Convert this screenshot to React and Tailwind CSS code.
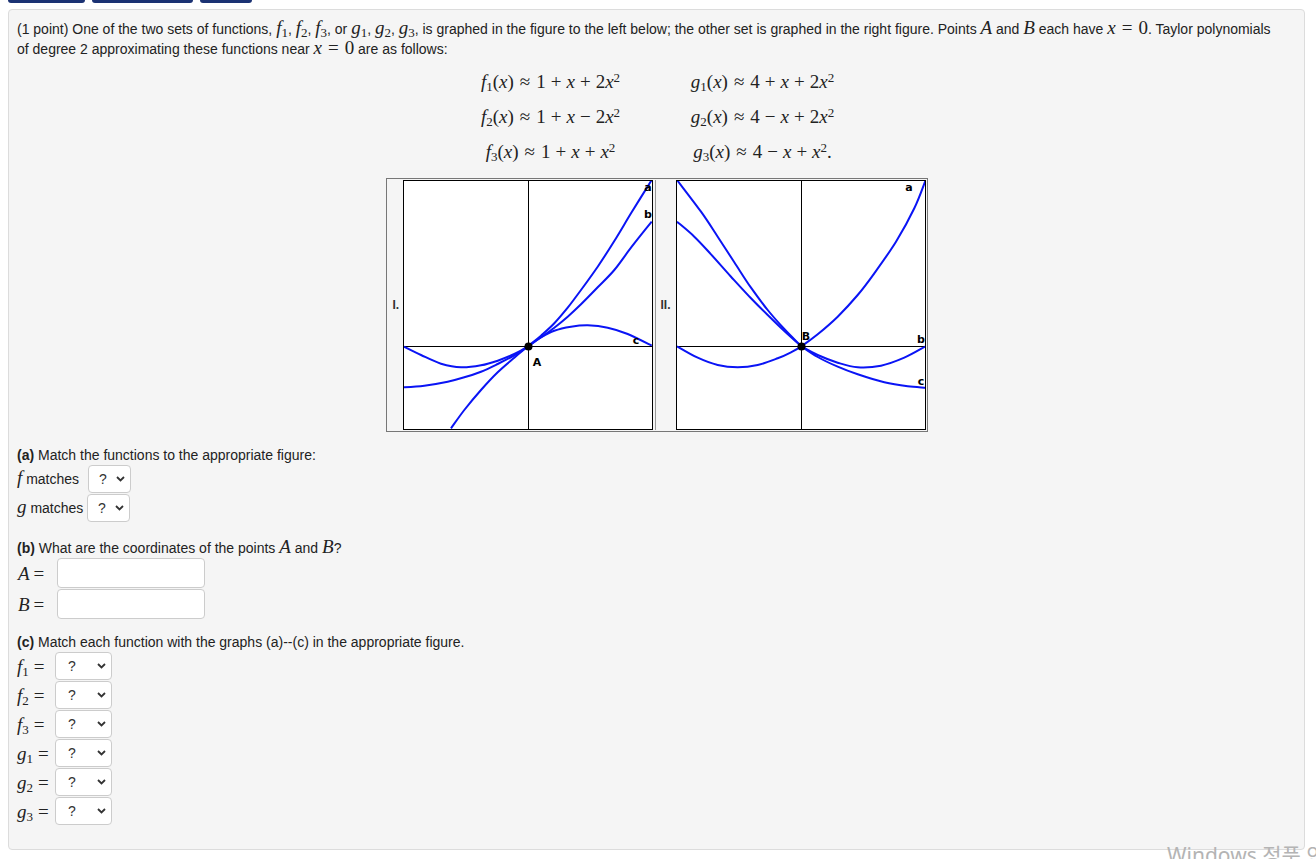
import React from "react";

const serif = "font-['Liberation_Serif',serif]";
const im = `${serif} text-[19px] leading-[14px]`;

function smooth(pts) {
  let d = `M${pts[0][0].toFixed(1)},${pts[0][1].toFixed(1)}`;
  for (let i = 0; i < pts.length - 1; i++) {
    const p0 = pts[i - 1] || pts[i];
    const p1 = pts[i];
    const p2 = pts[i + 1];
    const p3 = pts[i + 2] || p2;
    const c1 = [p1[0] + (p2[0] - p0[0]) / 6, p1[1] + (p2[1] - p0[1]) / 6];
    const c2 = [p2[0] - (p3[0] - p1[0]) / 6, p2[1] - (p3[1] - p1[1]) / 6];
    d += ` C${c1[0].toFixed(1)},${c1[1].toFixed(1)} ${c2[0].toFixed(1)},${c2[1].toFixed(1)} ${p2[0].toFixed(1)},${p2[1].toFixed(1)}`;
  }
  return d;
}

// traced from the figure, in 3x crop coords
const leftCurves = [
  [[210,760],[250,705],[300,645],[350,592],[400,548],[441,514],[480,482],[520,445],[560,398],[600,345],[650,275],[700,198],[750,115],[812,15]],
  [[67,637],[130,632],[200,620],[250,607],[300,590],[350,567],[400,541],[441,514],[480,487],[520,458],[560,425],[600,388],[650,337],[700,285],[750,218],[812,140]],
  [[67,514],[120,540],[180,566],[240,577],[300,571],[350,557],[400,537],[441,514],[480,487],[520,467],[570,455],[620,451],[680,458],[740,477],[812,512]],
].map((c) => c.map(([x, y]) => [x / 3 - 22, y / 3 - 5]));

const rightCurves = [
  [[78,514],[140,548],[200,570],[260,577],[320,570],[380,550],[420,532],[451,514],[500,478],[560,425],[620,360],[670,295],[735,200],[790,100],[824,15]],
  [[451,514],[400,462],[350,405],[300,338],[250,262],[200,185],[150,110],[78,15]],
  [[451,514],[400,468],[350,420],[300,370],[240,305],[180,238],[130,185],[78,140]],
  [[451,514],[500,540],[560,563],[620,577],[690,572],[760,548],[824,514]],
  [[451,514],[500,546],[560,575],[620,598],[700,622],[770,634],[824,638]],
].map((c) => c.map(([x, y]) => [x / 3 - 25, y / 3 - 5]));

function Graph({ curves, labels }) {
  return (
    <svg width="250" height="250" className="block bg-white">
      <line x1="125.5" y1="0" x2="125.5" y2="250" stroke="#000" strokeWidth="1" />
      <line x1="0" y1="166.5" x2="250" y2="166.5" stroke="#000" strokeWidth="1" />
      {curves.map((c, i) => (
        <path key={i} d={smooth(c)} fill="none" stroke="#0a14f5" strokeWidth="2" />
      ))}
      <circle cx="125.5" cy="166.5" r="4" fill="#000" />
      {labels.map(([t, x, y]) => (
        <text key={t + x} x={x} y={y} fontSize="11" fontWeight="bold" textAnchor="middle" dominantBaseline="middle" fontFamily="DejaVu Sans, sans-serif" fill="#000">
          {t}
        </text>
      ))}
      <rect x="0.5" y="0.5" width="249" height="249" fill="none" stroke="#000" strokeWidth="1" />
    </svg>
  );
}

function V({ children }) {
  return <i className={`${serif} italic`}>{children}</i>;
}

function Sub({ children }) {
  return <sub className="text-[13px] leading-none">{children}</sub>;
}

function Op({ children, w = 6 }) {
  return <span className={w === 6 ? "mx-[6px]" : "mx-[5px]"}>{children}</span>;
}

function Fn({ n, s }) {
  return (
    <span className={`${im} whitespace-nowrap`}>
      <V>{n}</V>
      <Sub>{s}</Sub>
    </span>
  );
}

function Chevron() {
  return (
    <svg width="9" height="6" viewBox="0 0 9 6">
      <path d="M1 1 L4.5 4.5 L8 1" fill="none" stroke="#333" strokeWidth="1.8" />
    </svg>
  );
}

function Select({ w, pl, pr }) {
  return (
    <div className={`${w} ${pl} ${pr} h-[28px] bg-white border border-[#ccc] rounded-[4px] flex items-center justify-between`}>
      <span className="text-[14px] text-[#333]">?</span>
      <Chevron />
    </div>
  );
}

function Sq() {
  return <sup className="text-[13px] leading-none">2</sup>;
}

function Formula({ f, s, rest }) {
  return (
    <div className={`${serif} text-[19px] leading-none whitespace-nowrap`}>
      <V>{f}</V>
      <Sub>{s}</Sub>(<V>x</V>)<Op>≈</Op>
      {rest}
    </div>
  );
}

export default function App() {
  const rows = [
    ["f", "1"],
    ["f", "2"],
    ["f", "3"],
    ["g", "1"],
    ["g", "2"],
    ["g", "3"],
  ];
  return (
    <div className="relative h-[859px] overflow-hidden bg-white font-['Liberation_Sans',Arial,sans-serif] text-[14px] text-[#222]">
      <div className="flex pl-2 h-[3px]">
        <div className="w-[77px] bg-[#1b3273] rounded-b-[3px]" />
        <div className="w-[101px] ml-[7px] bg-[#1b3273] rounded-b-[3px]" />
        <div className="w-[52px] ml-[7px] bg-[#1b3273] rounded-b-[3px]" />
      </div>
      <div className="ml-2 mt-[6px] w-[1297px] bg-[#f5f5f5] border border-[#dcdcdc] rounded-[4px] px-2 pt-[9px] pb-[24px]">
        <p className="leading-[20px]">
          (1 point) One of the two sets of functions, <Fn n="f" s="1" />, <Fn n="f" s="2" />, <Fn n="f" s="3" />, or{" "}
          <Fn n="g" s="1" />, <Fn n="g" s="2" />, <Fn n="g" s="3" />, is graphed in the figure to the left below; the other set is
          graphed in the right figure. Points{" "}
          <span className={im}>
            <V>A</V>
          </span>{" "}
          and{" "}
          <span className={im}>
            <V>B</V>
          </span>{" "}
          each have{" "}
          <span className={im}>
            <V>x</V>
            <Op>=</Op>0
          </span>
          . Taylor polynomials
          <br />
          of degree 2 approximating these functions near{" "}
          <span className={im}>
            <V>x</V>
            <Op>=</Op>0
          </span>{" "}
          are as follows:
        </p>

        <div className="mt-[5px] flex justify-center gap-[42px]">
          <div className="w-[170px] flex flex-col items-center">
            <div className="h-[35px] flex items-center">
              <Formula f="f" s="1" rest={<>1<Op w={5}>+</Op><V>x</V><Op w={5}>+</Op>2<V>x</V><Sq /></>} />
            </div>
            <div className="h-[35px] flex items-center">
              <Formula f="f" s="2" rest={<>1<Op w={5}>+</Op><V>x</V><Op w={5}>−</Op>2<V>x</V><Sq /></>} />
            </div>
            <div className="h-[35px] flex items-center">
              <Formula f="f" s="3" rest={<>1<Op w={5}>+</Op><V>x</V><Op w={5}>+</Op><V>x</V><Sq /></>} />
            </div>
          </div>
          <div className="w-[170px] flex flex-col items-center">
            <div className="h-[35px] flex items-center">
              <Formula f="g" s="1" rest={<>4<Op w={5}>+</Op><V>x</V><Op w={5}>+</Op>2<V>x</V><Sq /></>} />
            </div>
            <div className="h-[35px] flex items-center">
              <Formula f="g" s="2" rest={<>4<Op w={5}>−</Op><V>x</V><Op w={5}>+</Op>2<V>x</V><Sq /></>} />
            </div>
            <div className="h-[35px] flex items-center">
              <Formula f="g" s="3" rest={<>4<Op w={5}>−</Op><V>x</V><Op w={5}>+</Op><V>x</V><Sq />.</>} />
            </div>
          </div>
        </div>

        <div className="mt-[9px] flex justify-center">
          <div className="flex border border-[#777] py-[1px] pr-[1px]">
            <div className="w-[16px] flex items-center pl-[6px] text-[12px] font-bold text-[#333]">I.</div>
            <Graph
              curves={leftCurves}
              labels={[["a", 245, 8], ["b", 245, 35], ["c", 233, 161], ["A", 134, 183]]}
            />
            <div className="ml-[2px] w-[21px] border-l border-[#999] flex items-center pl-[5px] text-[12px] font-bold text-[#333]">II.</div>
            <Graph
              curves={rightCurves}
              labels={[["a", 233, 8], ["B", 130, 157], ["b", 245, 160], ["c", 245, 202]]}
            />
          </div>
        </div>

        <p className="mt-[13px] leading-[20px]">
          <b>(a)</b> Match the functions to the appropriate figure:
        </p>
        <div className="flex flex-col gap-[1px]">
          <div className="h-[28px] flex items-center">
            <span className="w-[71px]">
              <span className={im}><V>f</V></span> matches
            </span>
            <Select w="w-[43px]" pl="pl-[10px]" pr="pr-[5px]" />
          </div>
          <div className="h-[28px] flex items-center">
            <span className="w-[70px]">
              <span className={im}><V>g</V></span> matches
            </span>
            <Select w="w-[43px]" pl="pl-[10px]" pr="pr-[5px]" />
          </div>
        </div>

        <p className="mt-[16px] leading-[20px]">
          <b>(b)</b> What are the coordinates of the points{" "}
          <span className={im}><V>A</V></span> and{" "}
          <span className={im}><V>B</V></span>?
        </p>
        <div className="flex flex-col gap-[1px]">
          {["A", "B"].map((p) => (
            <div key={p} className="h-[30px] flex items-center">
              <span className={`w-[40px] ${serif} text-[19px] leading-none pl-[1px]`}>
                <V>{p}</V>
                <span className="ml-[4px]">=</span>
              </span>
              <div className="w-[148px] h-[30px] bg-white border border-[#ccc] rounded-[4px]" />
            </div>
          ))}
        </div>

        <p className="mt-[13px] leading-[20px]">
          <b>(c)</b> Match each function with the graphs (a)--(c) in the appropriate figure.
        </p>
        <div className="flex flex-col gap-[1px]">
          {rows.map(([n, s]) => (
            <div key={n + s} className="h-[28px] flex items-center">
              <span className={`w-[38px] ${serif} text-[19px] leading-none`}>
                <V>{n}</V>
                <Sub>{s}</Sub>
                <span className="ml-[5px]">=</span>
              </span>
              <Select w="w-[57px]" pl="pl-[12px]" pr="pr-[5px]" />
            </div>
          ))}
        </div>
      </div>

      <div className="absolute left-[1167px] top-[845px] text-[21px] leading-none text-[#b4b4b4] whitespace-nowrap font-['Noto_Sans','Noto_Sans_CJK_KR',sans-serif]">
        Windows 정품 인증
      </div>
    </div>
  );
}
